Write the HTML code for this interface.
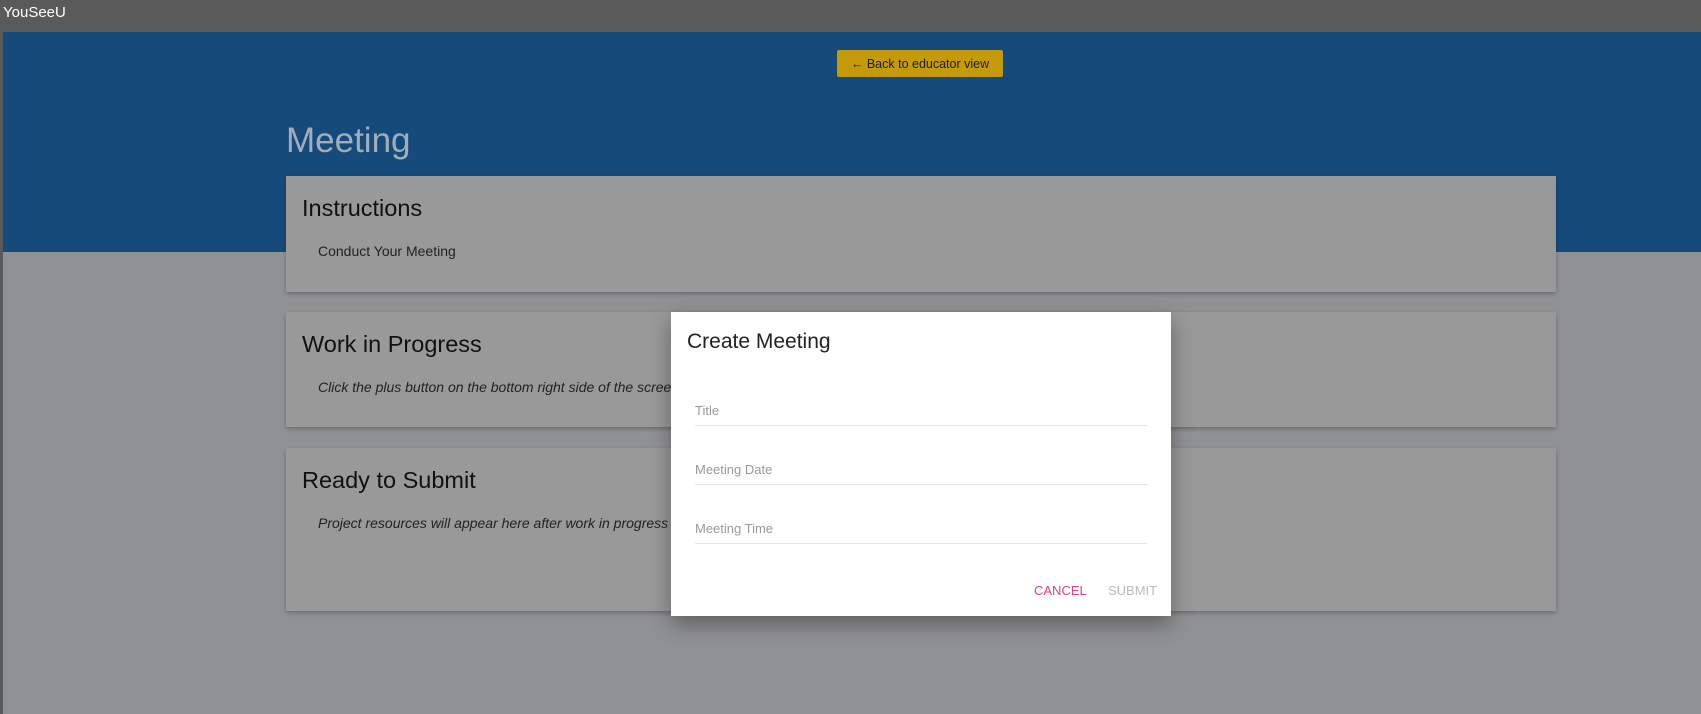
<!DOCTYPE html>
<html><head><style>
*{margin:0;padding:0;box-sizing:border-box}
body{width:1701px;height:714px;overflow:hidden;background:#909193;font-family:"Liberation Sans",sans-serif;position:relative}
.top{position:absolute;left:0;top:0;width:1701px;height:32px;background:#5a5a5a;color:#fff;font-size:15px;padding:4px 0 0 3px}
.side{position:absolute;left:0;top:32px;width:3px;height:682px;background:#5a5a5a}
.blue{position:absolute;left:3px;top:32px;width:1698px;height:220px;background:#164a7a}
.btn{position:absolute;left:837px;top:50px;width:166px;height:27px;background:#c49a0b;border-radius:2px;font-size:12.5px;color:#222;text-align:center;line-height:28px}
.h1{position:absolute;left:286px;top:121px;font-size:35px;color:#a0adbb}
.card{position:absolute;left:286px;width:1270px;background:#999;box-shadow:0 2px 4px rgba(0,0,0,.25)}
.card h2{position:absolute;left:16px;font-weight:normal;font-size:23.5px;color:#111}
.card p{position:absolute;left:32px;font-size:14px;color:#222}
.dlg{position:absolute;left:671px;top:312px;width:500px;height:304px;background:#fff;box-shadow:0 8px 20px rgba(0,0,0,.35)}
.dlg h3{position:absolute;left:16px;top:18px;font-weight:normal;font-size:21px;color:#222}
.f{position:absolute;left:24px;width:452px;border-bottom:1px solid #e6e6e6;font-size:13px;color:#999;height:23px}
.b{position:absolute;top:271px;font-size:13px}
</style></head><body>
<div class="top">YouSeeU</div>
<div class="side"></div>
<div class="blue"></div>
<div class="btn">← Back to educator view</div>
<div class="h1">Meeting</div>
<div class="card" style="top:176px;height:116px"><h2 style="top:19px">Instructions</h2><p style="top:67px">Conduct Your Meeting</p></div>
<div class="card" style="top:312px;height:115px"><h2 style="top:19px">Work in Progress</h2><p style="top:67px;font-style:italic">Click the plus button on the bottom right side of the screen</p></div>
<div class="card" style="top:448px;height:163px"><h2 style="top:19px">Ready to Submit</h2><p style="top:67px;font-style:italic">Project resources will appear here after work in progress re</p></div>
<div class="dlg">
<h3>Create Meeting</h3>
<div class="f" style="top:91px">Title</div>
<div class="f" style="top:150px">Meeting Date</div>
<div class="f" style="top:209px">Meeting Time</div>
<div class="b" style="left:363px;color:#e4407a">CANCEL</div>
<div class="b" style="left:437px;color:#bbb">SUBMIT</div>
</div>
</body></html>
